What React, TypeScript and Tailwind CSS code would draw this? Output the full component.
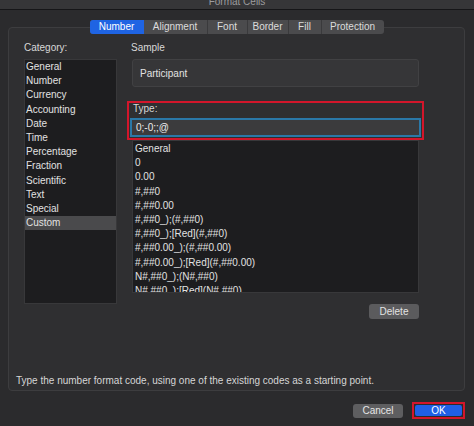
import React from 'react';

const tabs = ['Number', 'Alignment', 'Font', 'Border', 'Fill', 'Protection'];
const tabWidths = ['w-[54px]', 'w-[63px]', 'w-[40px]', 'w-[41px]', 'w-[33px]', 'w-[63px]'];

const categories = [
  'General', 'Number', 'Currency', 'Accounting', 'Date', 'Time',
  'Percentage', 'Fraction', 'Scientific', 'Text', 'Special', 'Custom',
];

// only the rows that show in the list window
const formats = [
  'General',
  '0',
  '0.00',
  '#,##0',
  '#,##0.00',
  '#,##0_);(#,##0)',
  '#,##0_);[Red](#,##0)',
  '#,##0.00_);(#,##0.00)',
  '#,##0.00_);[Red](#,##0.00)',
  'N#,##0_);(N#,##0)',
  'N#,##0_);[Red](N#,##0)',
];

const App: React.FC = () => {
  return (
    <div
      className="w-[474px] h-[426px] overflow-hidden bg-[#2b2b2d] flex flex-col text-[10px] text-[#e2e2e2]"
      style={{ fontFamily: '"Liberation Sans", Arial, sans-serif' }}
    >
      {/* Title bar, cut off at the top */}
      <div className="h-[10px] shrink-0 bg-[#363638] border-b border-[#161618] flex justify-center overflow-hidden">
        <span className="text-[#9c9c9e] leading-[10px] -mt-[3px]">Format Cells</span>
      </div>

      <div className="px-[8px] pr-[9px] flex flex-col">
        {/* Tabs */}
        <div className="relative z-10 mt-[10px] flex justify-center">
          <div className="flex h-[14px] rounded-[3px] overflow-hidden bg-[#4b4b4d]">
            {tabs.map((t, i) => (
              <div
                key={t}
                className={`${tabWidths[i]} flex items-center justify-center leading-none ${
                  i === 0 ? 'bg-[#1f64e3] text-white' : 'text-[#dcdcdc] border-l border-[#3a3a3c]'
                } ${i === 1 ? 'border-l-0' : ''}`}
              >
                {t}
              </div>
            ))}
          </div>
        </div>

        {/* Group box */}
        <div className="-mt-[7px] h-[364px] rounded-[4px] border border-[#3d3d3f] bg-[#2f2f31] flex flex-col">
          <div className="flex pl-[15px] pt-[14px]">
            {/* Category column */}
            <div className="w-[93px] flex flex-col">
              <div className="h-[17px] leading-[12px] text-[#d8d8d8]">Category:</div>
              <div className="h-[245px] bg-[#1d1d1f] border border-[#38383a] flex flex-col">
                {categories.map((c) => (
                  <div
                    key={c}
                    className={`h-[14.2px] leading-[14.2px] pl-[1px] ${c === 'Custom' ? 'bg-[#4a4a4c]' : ''}`}
                  >
                    {c}
                  </div>
                ))}
              </div>
            </div>

            {/* Right column */}
            <div className="ml-[15px] w-[287px] flex flex-col">
              <div className="h-[17px] leading-[12px] text-[#d8d8d8] -ml-[1px]">Sample</div>
              <div className="h-[28px] rounded-[3px] bg-[#363638] border border-[#414143] flex items-center pl-[7px]">
                Participant
              </div>

              <div className="mt-[14px] -mx-[5px] h-[39px] border-2 border-[#d3162b] flex flex-col px-[1px]">
                <div className="h-[15px] leading-[12px] pl-[3px] text-[#d8d8d8]">Type:</div>
                <div className="h-[19px] bg-[#3b3b3d] border-2 border-[#2a78a8] flex items-center pl-[4px] text-[#ececec]">
                  0;-0;;@
                </div>
              </div>

              <div className="h-[153px] overflow-hidden bg-[#1d1d1f] border border-[#38383a] pt-[1px] pl-[2px]">
                {formats.map((f) => (
                  <div key={f} className="h-[14.2px] leading-[14.2px] whitespace-nowrap">
                    {f}
                  </div>
                ))}
              </div>

              <div className="flex justify-end mt-[11px]">
                <div className="w-[50px] h-[15px] rounded-[3px] bg-[#5b5b5d] flex items-center justify-center text-[#e4e4e4] leading-none">
                  Delete
                </div>
              </div>
            </div>
          </div>

          <div className="mt-auto pl-[7px] pb-[3px] leading-[12px] text-[#d6d6d6]">
            Type the number format code, using one of the existing codes as a starting point.
          </div>
        </div>

        {/* Bottom buttons */}
        <div className="flex justify-end items-center mt-[11px]">
          <div className="w-[50px] h-[14px] rounded-[3px] bg-[#5e5e60] flex items-center justify-center text-[#e6e6e6] leading-none">
            Cancel
          </div>
          <div className="ml-[9px] w-[53px] h-[17px] border-2 border-[#d3162b] p-[1px] flex">
            <div className="flex-1 rounded-[2px] bg-[#1f5fe6] flex items-center justify-center text-white leading-none">
              OK
            </div>
          </div>
        </div>
      </div>
    </div>
  );
};

export default App;
